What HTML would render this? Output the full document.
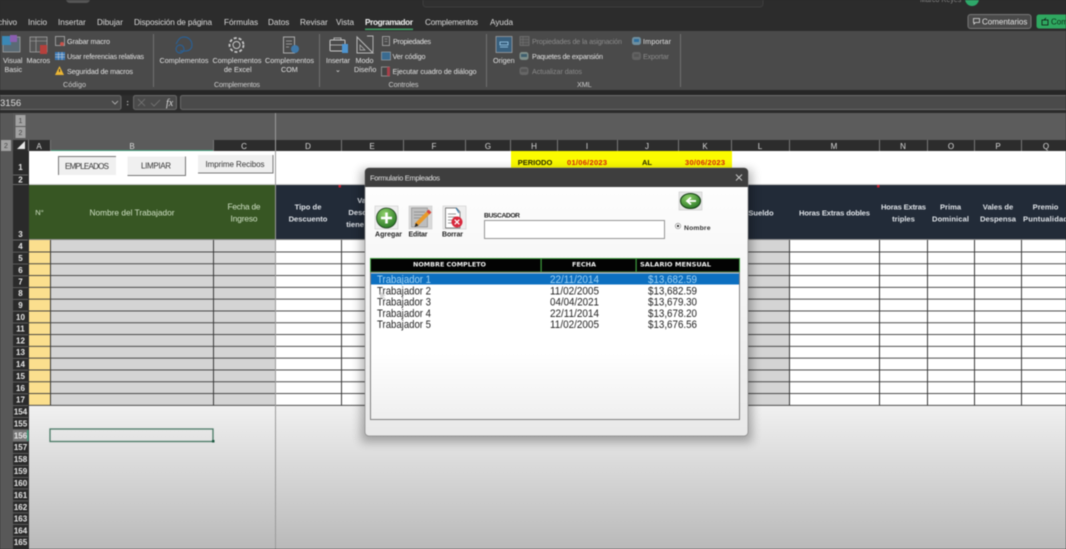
<!DOCTYPE html>
<html><head><meta charset="utf-8"><title>Formulario Empleados</title>
<style>
html,body{margin:0;padding:0;background:#2b2b2b;width:1066px;height:549px;overflow:hidden}
svg{display:block;filter:blur(.4px)}
text{font-family:"Liberation Sans",sans-serif}
.r{font-size:7.2px;fill:#e2e2e2}
.t{font-size:8.2px;fill:#dcdcdc}
.d{font-size:7.2px;fill:#8a8a8a}
.c{font-size:8px;fill:#d8d8d8;text-anchor:middle}
.n{font-size:8px;fill:#e6e6e6;text-anchor:middle;font-weight:bold}
.h{font-size:7.6px;fill:#dfe3e8;text-anchor:middle;font-weight:bold}
.g{font-size:8.3px;fill:#cfe0c4;text-anchor:middle}
.l{font-size:11px;fill:#222}
.b{font-size:8px;fill:#333;text-anchor:middle}
.m{font-size:7px;fill:#222;font-weight:bold;text-anchor:middle}
.dj{font-family:"DejaVu Sans",sans-serif}
</style></head><body>
<svg width="1066" height="549" viewBox="0 0 1066 549" xmlns="http://www.w3.org/2000/svg">
<defs>
<linearGradient id="low" x1="0" y1="0" x2="0" y2="1"><stop offset="0" stop-color="#f1f1f1"/><stop offset="1" stop-color="#b9b9b9"/></linearGradient>
<linearGradient id="dlg" x1="0" y1="0" x2="0" y2="1"><stop offset="0" stop-color="#fff"/><stop offset="1" stop-color="#e9e9e9"/></linearGradient>
<linearGradient id="lst" x1="0" y1="0" x2="0" y2="1"><stop offset="0" stop-color="#fff"/><stop offset=".55" stop-color="#fff"/><stop offset="1" stop-color="#efefef"/></linearGradient>
<radialGradient id="gb" cx=".4" cy=".3" r=".8"><stop offset="0" stop-color="#8fd06a"/><stop offset="1" stop-color="#1e6f1e"/></radialGradient>
<filter id="sh" x="-10%" y="-10%" width="120%" height="120%"><feGaussianBlur stdDeviation="5"/></filter>
</defs>

<!-- top chrome -->
<rect width="1066" height="31" fill="#2c2c2c"/>
<rect x="66" y="-6" width="24" height="9" rx="4" fill="#555"/>
<rect x="423" y="-8" width="340" height="15" rx="3" fill="#303030" stroke="#3d3d3d"/>
<circle cx="972" cy="-1" r="7" fill="#2ea86a"/>
<text x="920" y="2" font-size="7" fill="#888">Marco Reyes</text>

<!-- tabs -->
<g class="t">
<text x="-2" y="25">chivo</text>
<text x="28" y="25">Inicio</text>
<text x="58" y="25">Insertar</text>
<text x="97" y="25">Dibujar</text>
<text x="134" y="25" textLength="78">Disposición de página</text>
<text x="224" y="25">Fórmulas</text>
<text x="268" y="25">Datos</text>
<text x="300" y="25">Revisar</text>
<text x="336" y="25">Vista</text>
<text x="365" y="25" fill="#f2f2f2" font-weight="bold" textLength="48">Programador</text>
<text x="425" y="25" textLength="53">Complementos</text>
<text x="490" y="25">Ayuda</text>
</g>
<rect x="365" y="28.500" width="48" height="1.600" fill="#3f9a62"/>
<rect x="968" y="14.500" width="63" height="14" rx="2.500" fill="#4a4a4a" stroke="#777"/>
<path d="M973.500 18.500h6v4h-4l-1.500 1.500v-1.500h-.5z" fill="none" stroke="#ddd" stroke-width=".8"/>
<text x="982" y="24.500" font-size="8" fill="#e6e6e6">Comentarios</text>
<rect x="1036.500" y="14.500" width="40" height="14" rx="2.500" fill="#2fa860"/>
<path d="M1042 20h6v5h-6zM1044 20l2-2" fill="none" stroke="#111" stroke-width=".8"/>
<text x="1051" y="24.500" font-size="8" fill="#0d2d18">Com</text>

<!-- ribbon -->
<rect y="31" width="1066" height="59" fill="#4a4a4a"/>
<rect y="90" width="1066" height="5" fill="#262626"/>
<g fill="#707070"><rect x="153" y="34" width="1" height="53"/><rect x="319" y="34" width="1" height="53"/><rect x="486" y="34" width="1" height="53"/><rect x="680" y="34" width="1" height="53"/></g>

<!-- ribbon icons -->
<rect x="3" y="37" width="17" height="15" fill="#5a6a75" stroke="#aaa" stroke-width=".7"/>
<rect x="2" y="36" width="9" height="9" fill="#3b88b5"/><rect x="10" y="35" width="7" height="7" fill="#8a5fb0"/>
<rect x="30" y="37" width="17" height="15" fill="#555" stroke="#aaa" stroke-width=".7"/>
<path d="M30 41h17M36 37v15" stroke="#aaa" stroke-width=".6"/><rect x="40" y="45" width="7" height="9" fill="#b5403c"/>
<rect x="55.500" y="36.500" width="9" height="9" fill="none" stroke="#bbb" stroke-width=".7"/><circle cx="62" cy="44" r="2" fill="#c8524b"/>
<rect x="55" y="52" width="10" height="8" fill="#3a78b5"/><path d="M55 54.500h10M55 57h10M58.500 52v8M62 52v8" stroke="#ddd" stroke-width=".5"/>
<path d="M59.500 66l-4.500 9h9z" fill="#eab534"/><rect x="59" y="69" width="1" height="3" fill="#333"/>
<path d="M176 44c2-3 3-7 8-7 5 0 8 4 8 8s-3 6-7 6h-5" fill="none" stroke="#2b5f92" stroke-width="1.200"/><circle cx="180" cy="49" r="4" fill="none" stroke="#2b5f92" stroke-width="1.200"/>
<circle cx="236.500" cy="45" r="3.500" fill="none" stroke="#c8c8c8"/><circle cx="236.500" cy="45" r="7" fill="none" stroke="#c8c8c8" stroke-width="1.800" stroke-dasharray="3 2"/>
<rect x="283.500" y="37" width="11" height="16" fill="none" stroke="#aaa"/><circle cx="295" cy="49" r="4" fill="#3f78a8"/><path d="M286 41h6M286 44h6M286 47h3" stroke="#aaa" stroke-width=".8"/>
<rect x="330" y="40" width="15" height="11" rx="1" fill="none" stroke="#c8c8c8"/><path d="M334 40v-2h7v2M330 45h15" stroke="#c8c8c8" stroke-width=".8" fill="none"/><rect x="342" y="44" width="6" height="9" fill="#4d94cf"/>
<path d="M357 37l16 16h-16z" fill="none" stroke="#bbb"/><path d="M360 45l5 5h-5z" fill="none" stroke="#bbb" stroke-width=".7"/><path d="M367 36h6v16" fill="none" stroke="#bbb" stroke-width=".9"/>
<rect x="382.500" y="36.500" width="7" height="9" fill="none" stroke="#bbb" stroke-width=".7"/><path d="M384.500 39h3M384.500 41.500h3" stroke="#bbb" stroke-width=".6"/>
<rect x="381.500" y="52" width="9" height="8" fill="#3a6b90" stroke="#bbb" stroke-width=".5"/>
<rect x="381.500" y="67" width="8" height="9" fill="#444" stroke="#bbb" stroke-width=".6"/><rect x="387" y="67" width="3" height="9" fill="#a8404a"/>
<rect x="496" y="36.500" width="16" height="16" fill="#39607e" stroke="#aaa" stroke-width=".7"/><path d="M500 42h8v3h-8zM500 47h8" stroke="#9fd0ef" stroke-width=".8" fill="none"/>
<rect x="520" y="36.500" width="9" height="9" fill="#555" stroke="#777" stroke-width=".7"/><path d="M520 39.500h9M520 42.500h9M523 36.500v9" stroke="#777" stroke-width=".5"/>
<rect x="519.500" y="52" width="9" height="8" rx="2.500" fill="#7f8f8a"/><rect x="521" y="54" width="6" height="3" fill="#3f5f6f"/>
<rect x="519.500" y="67" width="9" height="8" rx="2.500" fill="#666"/><rect x="521" y="69" width="6" height="3" fill="#555"/>
<rect x="632" y="37" width="9" height="8" rx="2.500" fill="#6f8f9f"/><rect x="634" y="39" width="5" height="3" fill="#2f6f9f"/>
<rect x="632" y="52" width="9" height="8" rx="2.500" fill="#626262"/><rect x="634" y="54" width="5" height="3" fill="#555"/>

<!-- ribbon text -->
<g class="r">
<text x="3" y="63">Visual</text><text x="4.500" y="72">Basic</text>
<text x="26.500" y="63">Macros</text>
<text x="67" y="44" textLength="43">Grabar macro</text>
<text x="67" y="59" textLength="77">Usar referencias relativas</text>
<text x="67" y="74" textLength="66">Seguridad de macros</text>
<text x="63" y="87" fill="#ccc" textLength="23">Código</text>
<text x="159.500" y="63" textLength="49">Complementos</text>
<text x="212.500" y="63" textLength="49">Complementos</text><text x="224" y="72">de Excel</text>
<text x="265" y="63" textLength="49">Complementos</text><text x="281" y="72">COM</text>
<text x="214" y="87" fill="#ccc" textLength="46">Complementos</text>
<text x="326" y="63" textLength="24">Insertar</text><text x="335" y="72">⌄</text>
<text x="355.500" y="63">Modo</text><text x="354" y="72">Diseño</text>
<text x="393" y="44" textLength="38">Propiedades</text>
<text x="392.500" y="59" textLength="33">Ver código</text>
<text x="392.500" y="74" textLength="84">Ejecutar cuadro de diálogo</text>
<text x="388.500" y="87" fill="#ccc" textLength="30">Controles</text>
<text x="493" y="63">Origen</text>
<text x="532" y="44" class="d" textLength="90">Propiedades de la asignación</text>
<text x="532" y="59" textLength="71">Paquetes de expansión</text>
<text x="532" y="74" class="d" textLength="50">Actualizar datos</text>
<text x="643" y="44" textLength="28">Importar</text>
<text x="643" y="59" class="d" textLength="26">Exportar</text>
<text x="577" y="87" fill="#ccc">XML</text>
</g>

<!-- formula bar -->
<rect y="95" width="1066" height="15" fill="#2e2e2e"/>
<rect x="-3" y="95.500" width="124" height="14" rx="2" fill="#4a4a4a" stroke="#6a6a6a"/>
<text x="0" y="106" font-size="9.500" fill="#ddd">3156</text>
<path d="M112 101l3 3 3-3" fill="none" stroke="#bbb" stroke-width=".8"/>
<rect x="127" y="101" width="1.200" height="1.200" fill="#bbb"/><rect x="127" y="104" width="1.200" height="1.200" fill="#bbb"/>
<rect x="133.500" y="95.500" width="43" height="14" rx="2" fill="#4a4a4a" stroke="#6a6a6a"/>
<path d="M138 99l7 7M145 99l-7 7M151 103l3 3 6-6" fill="none" stroke="#777" stroke-width=".8"/>
<text x="166" y="106" font-size="10" font-style="italic" fill="#ddd" style="font-family:'Liberation Serif',serif">fx</text>
<rect x="180.500" y="95.500" width="890" height="14" rx="2" fill="#4a4a4a" stroke="#6a6a6a"/>
<rect y="110" width="1066" height="3" fill="#2b2b2b"/>

<!-- outline area -->
<rect y="113" width="1066" height="27" fill="#5c5c5c"/>
<rect y="113" width="13" height="436" fill="#585858"/>
<rect x="15.500" y="115" width="10" height="11" fill="#a2a2a2"/><text x="20.500" y="123" font-size="7" fill="#444" text-anchor="middle">1</text>
<rect x="15.500" y="127" width="10" height="11" fill="#a2a2a2"/><text x="20.500" y="135" font-size="7" fill="#444" text-anchor="middle">2</text>
<rect x="1" y="140" width="10" height="11" fill="#a2a2a2"/><text x="6" y="148" font-size="7" fill="#444" text-anchor="middle">2</text>

<!-- sheet body -->
<rect x="29" y="151" width="1037" height="33" fill="#fff"/>
<rect x="29" y="405" width="1037" height="144" fill="url(#low)"/>

<!-- column headers -->
<rect x="13" y="140" width="1053" height="11" fill="#2c2c2c"/>
<path d="M25 141v8h-8z" fill="#e6e6e6"/>
<rect x="51" y="140" width="163" height="11" fill="#5b5b5b"/>
<rect x="51" y="150" width="163" height="1" fill="#3f9a78"/>
<g fill="#777"><rect x="28" y="140" width="1" height="11"/><rect x="50" y="140" width="1" height="11"/><rect x="213" y="140" width="1" height="11"/><rect x="275" y="140" width="1" height="11"/><rect x="341" y="140" width="1" height="11"/><rect x="403" y="140" width="1" height="11"/><rect x="465" y="140" width="1" height="11"/><rect x="510" y="140" width="1" height="11"/><rect x="557" y="140" width="1" height="11"/><rect x="617" y="140" width="1" height="11"/><rect x="678" y="140" width="1" height="11"/><rect x="731" y="140" width="1" height="11"/><rect x="789" y="140" width="1" height="11"/><rect x="879" y="140" width="1" height="11"/><rect x="927" y="140" width="1" height="11"/><rect x="974" y="140" width="1" height="11"/><rect x="1021" y="140" width="1" height="11"/></g>
<g class="c"><text x="39" y="149">A</text><text x="132" y="149">B</text><text x="244" y="149">C</text><text x="308" y="149">D</text><text x="372" y="149">E</text><text x="434" y="149">F</text><text x="488" y="149">G</text><text x="534" y="149">H</text><text x="587" y="149">I</text><text x="647" y="149">J</text><text x="705" y="149">K</text><text x="760" y="149">L</text><text x="834" y="149">M</text><text x="903" y="149">N</text><text x="951" y="149">O</text><text x="998" y="149">P</text><text x="1046" y="149">Q</text></g>

<!-- row headers -->
<rect x="13" y="151" width="15" height="398" fill="#2a2a2a"/>
<g fill="#666"><rect x="13" y="174.500" width="15" height="1"/><rect x="13" y="184" width="15" height="1"/><rect x="13" y="239.500" width="15" height="1"/>
<rect x="13" y="251.800" width="15" height=".8"/><rect x="13" y="263.600" width="15" height=".8"/><rect x="13" y="275.400" width="15" height=".8"/><rect x="13" y="287.200" width="15" height=".8"/><rect x="13" y="299" width="15" height=".8"/><rect x="13" y="310.800" width="15" height=".8"/><rect x="13" y="322.600" width="15" height=".8"/><rect x="13" y="334.400" width="15" height=".8"/><rect x="13" y="346.200" width="15" height=".8"/><rect x="13" y="358" width="15" height=".8"/><rect x="13" y="369.800" width="15" height=".8"/><rect x="13" y="381.600" width="15" height=".8"/><rect x="13" y="393.400" width="15" height=".8"/><rect x="13" y="405.200" width="15" height=".8"/>
<rect x="13" y="417" width="15" height=".8"/><rect x="13" y="429" width="15" height=".8"/><rect x="13" y="441" width="15" height=".8"/><rect x="13" y="453" width="15" height=".8"/><rect x="13" y="465" width="15" height=".8"/><rect x="13" y="477" width="15" height=".8"/><rect x="13" y="488.500" width="15" height=".8"/><rect x="13" y="500.500" width="15" height=".8"/><rect x="13" y="512.500" width="15" height=".8"/><rect x="13" y="524" width="15" height=".8"/><rect x="13" y="536" width="15" height=".8"/></g>
<rect x="13" y="430" width="15" height="11" fill="#777"/><rect x="27" y="430" width="1.500" height="11" fill="#3f9a78"/>
<g class="n">
<text x="20.500" y="170">1</text><text x="20.500" y="182.500">2</text><text x="20.500" y="237">3</text>
<text x="20.500" y="249">4</text><text x="20.500" y="261">5</text><text x="20.500" y="273">6</text><text x="20.500" y="284.500">7</text><text x="20.500" y="296">8</text><text x="20.500" y="308">9</text><text x="20.500" y="320">10</text><text x="20.500" y="331.500">11</text><text x="20.500" y="343.500">12</text><text x="20.500" y="355">13</text><text x="20.500" y="367">14</text><text x="20.500" y="379">15</text><text x="20.500" y="391">16</text><text x="20.500" y="402.500">17</text>
<text x="20.500" y="414.500">154</text><text x="20.500" y="426.500">155</text><text x="20.500" y="438.500">156</text><text x="20.500" y="450">157</text><text x="20.500" y="462">158</text><text x="20.500" y="474">159</text><text x="20.500" y="486">160</text><text x="20.500" y="498">161</text><text x="20.500" y="510">162</text><text x="20.500" y="521.500">163</text><text x="20.500" y="533.500">164</text><text x="20.500" y="545">165</text>
</g>

<!-- header row 3 -->
<rect x="29" y="185" width="246" height="54" fill="#375623"/>
<rect x="276" y="185" width="790" height="54" fill="#222b38"/>
<rect x="29" y="184" width="1037" height="1" fill="#ccc"/>
<g class="g"><text x="39.500" y="215" font-size="7.500">N°</text><text x="132" y="215.500" textLength="85">Nombre del Trabajador</text><text x="244" y="209.500" textLength="33">Fecha de</text><text x="244" y="221.500" textLength="27">Ingreso</text></g>
<g class="h">
<text x="308" y="209.500">Tipo de</text><text x="308" y="221.500">Descuento</text>
<text x="372" y="203">Valor de</text><text x="372" y="215">Descuento si</text><text x="372" y="227">tiene Infonavit</text>
<text x="761" y="215.500">Sueldo</text>
<text x="834.500" y="215.500" textLength="71">Horas Extras dobles</text>
<text x="903.500" y="209.500" textLength="45">Horas Extras</text><text x="903.500" y="221.500">triples</text>
<text x="950.500" y="209.500">Prima</text><text x="950.500" y="221.500" textLength="37">Dominical</text>
<text x="998" y="209.500">Vales de</text><text x="998" y="221.500" textLength="36">Despensa</text>
<text x="1045.500" y="209.500">Premio</text><text x="1045.500" y="221.500" textLength="45">Puntualidad</text>
</g>
<rect x="338.500" y="185" width="2.500" height="2.500" fill="#c42030"/>
<rect x="877" y="185" width="2.500" height="2.500" fill="#c42030"/>

<!-- data grid -->
<rect x="29" y="240" width="21" height="165" fill="#fbdf8e"/>
<rect x="51" y="240" width="224" height="165" fill="#d4d4d4"/>
<rect x="276" y="240" width="790" height="165" fill="#fff"/>
<rect x="732" y="240" width="57" height="165" fill="#d4d4d4"/>
<g fill="#3a3a3a">
<rect x="29" y="251.500" width="1037" height=".9"/><rect x="29" y="263.300" width="1037" height=".9"/><rect x="29" y="275.100" width="1037" height=".9"/><rect x="29" y="286.900" width="1037" height=".9"/><rect x="29" y="298.700" width="1037" height=".9"/><rect x="29" y="310.500" width="1037" height=".9"/><rect x="29" y="322.300" width="1037" height=".9"/><rect x="29" y="334.100" width="1037" height=".9"/><rect x="29" y="345.900" width="1037" height=".9"/><rect x="29" y="357.700" width="1037" height=".9"/><rect x="29" y="369.500" width="1037" height=".9"/><rect x="29" y="381.300" width="1037" height=".9"/><rect x="29" y="393.100" width="1037" height=".9"/><rect x="29" y="404.900" width="1037" height=".9"/>
<rect x="50" y="240" width="1" height="165"/><rect x="213" y="240" width="1" height="165"/><rect x="341" y="240" width="1" height="165"/><rect x="403" y="240" width="1" height="165"/><rect x="789" y="240" width="1" height="165"/><rect x="879" y="240" width="1" height="165"/><rect x="927" y="240" width="1" height="165"/><rect x="974" y="240" width="1" height="165"/><rect x="1021" y="240" width="1" height="165"/>
</g>
<rect x="29" y="239" width="1037" height="1" fill="#888"/>

<!-- freeze pane line -->
<rect x="275" y="113" width="1" height="436" fill="#9a9a9a"/>

<!-- sheet buttons -->
<rect x="58" y="156" width="58" height="19" fill="#f0f0f0"/><path d="M58.500 175v-18.500h57.500" fill="none" stroke="#777"/>
<text x="87" y="169" class="b" textLength="44">EMPLEADOS</text>
<rect x="127.500" y="156.500" width="58" height="19" fill="#f0f0f0"/><path d="M185.500 156.500v19h-58" fill="none" stroke="#777"/>
<text x="156" y="168.500" class="b" textLength="30">LIMPIAR</text>
<rect x="198" y="155" width="75" height="18" fill="#f0f0f0"/><path d="M273 155v18h-75" fill="none" stroke="#777"/>
<text x="235" y="167" class="b" textLength="59">Imprime Recibos</text>

<!-- periodo -->
<rect x="511" y="151" width="221" height="17.500" fill="#fbfb00"/>
<text x="535" y="165" font-size="7.500" font-weight="bold" fill="#2a2a00" text-anchor="middle">PERIODO</text>
<text x="587" y="165" font-size="7.500" font-weight="bold" fill="#d8250f" text-anchor="middle" textLength="40">01/06/2023</text>
<text x="647" y="165" font-size="7.500" font-weight="bold" fill="#2a2a00" text-anchor="middle">AL</text>
<text x="705" y="165" font-size="7.500" font-weight="bold" fill="#d8250f" text-anchor="middle" textLength="40">30/06/2023</text>

<!-- selected cell -->
<rect x="50" y="429" width="163" height="12.500" fill="none" stroke="#4a7a66" stroke-width="1.300"/>
<rect x="212" y="440" width="2.500" height="2.500" fill="#1e5a42"/>

<!-- dialog -->
<rect x="361" y="170" width="391" height="272" fill="#000" opacity=".3" filter="url(#sh)"/>
<rect x="365" y="168" width="383" height="268" rx="4" fill="url(#dlg)" stroke="#888" stroke-width=".7"/>
<path d="M365 187v-15a4 4 0 0 1 4-4h375a4 4 0 0 1 4 4v15z" fill="#3e3e3e"/>
<text x="370" y="180.500" font-size="7.500" fill="#e2e2e2" textLength="70">Formulario Empleados</text>
<path d="M736 174.500l6 6M742 174.500l-6 6" stroke="#ccc" stroke-width=".9"/>

<!-- dialog icon buttons -->
<rect x="375" y="206" width="23" height="23" fill="#eee" stroke="#ccc" stroke-width=".6"/>
<circle cx="386.500" cy="218" r="10" fill="url(#gb)" stroke="#1d3d1d" stroke-width=".8"/>
<path d="M386.500 212.500v11M381 218h11" stroke="#fff" stroke-width="2.600"/>
<rect x="409" y="206" width="23" height="23" fill="#d9d9d9" stroke="#ccc" stroke-width=".6"/>
<rect x="411.500" y="208" width="16" height="19" fill="#bdbdbd" stroke="#777" stroke-width=".5"/>
<path d="M414 212h11M414 215h11M414 218h8" stroke="#888" stroke-width=".7"/>
<path d="M416 225l14-14" stroke="#e89a2a" stroke-width="4"/><path d="M428 213l2-2" stroke="#d64040" stroke-width="4"/><path d="M414.500 227l1.500-4 2.500 2.500z" fill="#222"/>
<rect x="443" y="206" width="23" height="23" fill="#eee" stroke="#ccc" stroke-width=".6"/>
<path d="M445.500 208h11l3.500 4v16h-14.500z" fill="#fff" stroke="#555" stroke-width=".7"/><path d="M448 214h8M448 217h8M448 220h6M448 223h5" stroke="#777" stroke-width=".8"/><path d="M456 208l3 5" stroke="#2d7ab0"/>
<circle cx="457" cy="222" r="5.500" fill="#d8283c"/><path d="M454.700 219.700l4.600 4.600M459.300 219.700l-4.600 4.600" stroke="#fff" stroke-width="1.300"/>
<g class="m"><text x="388.500" y="236.500" textLength="27">Agregar</text><text x="418" y="236.500" textLength="19">Editar</text><text x="452.500" y="236.500" textLength="21">Borrar</text></g>

<!-- search -->
<text x="484" y="217.500" font-size="6.700" font-weight="bold" fill="#222" textLength="36">BUSCADOR</text>
<rect x="484.500" y="220.500" width="180" height="18" fill="#fff" stroke="#8a8a8a" stroke-width=".9"/>

<!-- back button -->
<rect x="679" y="192" width="23" height="18" fill="#e6e6e6" stroke="#c8c8c8" stroke-width=".6"/>
<ellipse cx="690.500" cy="201" rx="10" ry="7.500" fill="url(#gb)" stroke="#143c14"/>
<path d="M696 201h-8M691 197.500l-4 3.500 4 3.500" fill="none" stroke="#fff" stroke-width="1.800"/>

<!-- radio -->
<circle cx="678" cy="226" r="2.700" fill="#fff" stroke="#777" stroke-width=".6"/><circle cx="678" cy="226" r="1.100" fill="#222"/>
<text x="684" y="230" font-size="6.800" font-weight="bold" fill="#333" textLength="26.500">Nombre</text>

<!-- list header -->
<rect x="370.500" y="258.500" width="369" height="13.500" fill="#030303" stroke="#3c9a3c" stroke-width="1"/>
<rect x="540.500" y="258.500" width="1.200" height="13.500" fill="#3c9a3c"/><rect x="635.500" y="258.500" width="1.200" height="13.500" fill="#3c9a3c"/>
<g font-size="6.500" font-weight="bold" fill="#eee" text-anchor="middle">
<text class="dj" x="449.500" y="266.500" textLength="73" lengthAdjust="spacingAndGlyphs">NOMBRE COMPLETO</text>
<text class="dj" x="584" y="266.500" textLength="24" lengthAdjust="spacingAndGlyphs">FECHA</text>
<text class="dj" x="675.500" y="266.500" textLength="71" lengthAdjust="spacingAndGlyphs">SALARIO MENSUAL</text>
</g>

<!-- list -->
<rect x="370.500" y="272.500" width="369" height="147" fill="url(#lst)" stroke="#7f7f7f"/>
<rect x="371" y="273.500" width="368" height="11" fill="#0c6fc0"/>
<g class="l">
<text x="377" y="283" fill="#9fd2f5" textLength="54" lengthAdjust="spacingAndGlyphs">Trabajador 1</text><text x="550" y="283" fill="#9fd2f5" textLength="49" lengthAdjust="spacingAndGlyphs">22/11/2014</text><text x="648" y="283" fill="#9fd2f5" textLength="49" lengthAdjust="spacingAndGlyphs">$13,682.59</text>
<text x="377" y="294.500" textLength="54" lengthAdjust="spacingAndGlyphs">Trabajador 2</text><text x="550" y="294.500" textLength="49" lengthAdjust="spacingAndGlyphs">11/02/2005</text><text x="648" y="294.500" textLength="49" lengthAdjust="spacingAndGlyphs">$13,682.59</text>
<text x="377" y="305.500" textLength="54" lengthAdjust="spacingAndGlyphs">Trabajador 3</text><text x="550" y="305.500" textLength="49" lengthAdjust="spacingAndGlyphs">04/04/2021</text><text x="648" y="305.500" textLength="49" lengthAdjust="spacingAndGlyphs">$13,679.30</text>
<text x="377" y="317" textLength="54" lengthAdjust="spacingAndGlyphs">Trabajador 4</text><text x="550" y="317" textLength="49" lengthAdjust="spacingAndGlyphs">22/11/2014</text><text x="648" y="317" textLength="49" lengthAdjust="spacingAndGlyphs">$13,678.20</text>
<text x="377" y="328" textLength="54" lengthAdjust="spacingAndGlyphs">Trabajador 5</text><text x="550" y="328" textLength="49" lengthAdjust="spacingAndGlyphs">11/02/2005</text><text x="648" y="328" textLength="49" lengthAdjust="spacingAndGlyphs">$13,676.56</text>
</g>
<path d="M380 291l0 8 2-2 3 3 1-1-3-3h3z" fill="#ccc" opacity=".8"/>
</svg>
</body></html>
